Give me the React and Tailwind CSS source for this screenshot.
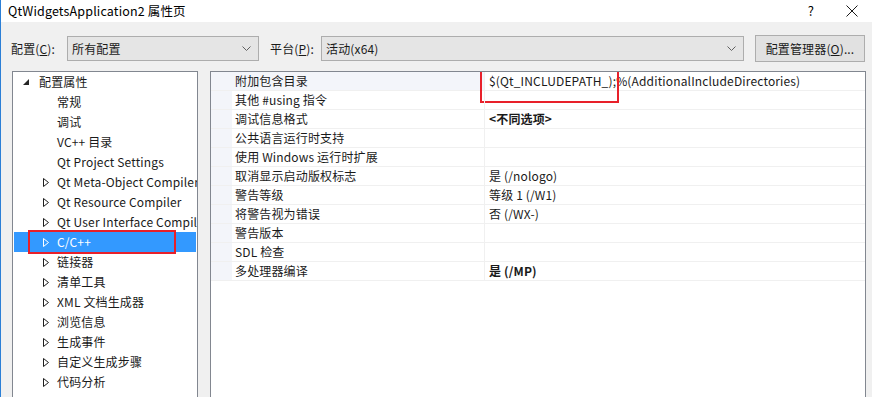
import React from 'react';

const FONT = { fontFamily: '"Noto Sans CJK SC", "Noto Sans", sans-serif' };

const TREE = [
  { label: '配置属性', level: 0, open: true },
  { label: '常规', level: 1 },
  { label: '调试', level: 1 },
  { label: 'VC++ 目录', level: 1 },
  { label: 'Qt Project Settings', level: 1 },
  { label: 'Qt Meta-Object Compiler', level: 1, arrow: true },
  { label: 'Qt Resource Compiler', level: 1, arrow: true },
  { label: 'Qt User Interface Compiler', level: 1, arrow: true },
  { label: 'C/C++', level: 1, arrow: true, selected: true },
  { label: '链接器', level: 1, arrow: true },
  { label: '清单工具', level: 1, arrow: true },
  { label: 'XML 文档生成器', level: 1, arrow: true },
  { label: '浏览信息', level: 1, arrow: true },
  { label: '生成事件', level: 1, arrow: true },
  { label: '自定义生成步骤', level: 1, arrow: true },
  { label: '代码分析', level: 1, arrow: true },
];

const PROPS = [
  ['附加包含目录', '$(Qt_INCLUDEPATH_);%(AdditionalIncludeDirectories)'],
  ['其他 #using 指令', ''],
  ['调试信息格式', '<不同选项>', true],
  ['公共语言运行时支持', ''],
  ['使用 Windows 运行时扩展', ''],
  ['取消显示启动版权标志', '是 (/nologo)'],
  ['警告等级', '等级 1 (/W1)'],
  ['将警告视为错误', '否 (/WX-)'],
  ['警告版本', ''],
  ['SDL 检查', ''],
  ['多处理器编译', '是 (/MP)', true],
];

function Chevron() {
  return (
    <svg width="9" height="6" viewBox="0 0 9 6" className="shrink-0">
      <path d="M0.5 0.5 L4.5 4.5 L8.5 0.5" fill="none" stroke="#606060" strokeWidth="1" />
    </svg>
  );
}

function Combo({ text, className = '' }) {
  return (
    <div
      className={`h-[25px] bg-[#e5e5e5] border border-[#adadad] flex items-center justify-between pl-[4px] pr-[7px] ${className}`}
    >
      <span>{text}</span>
      <Chevron />
    </div>
  );
}

function OpenArrow() {
  return (
    <svg width="6" height="6" viewBox="0 0 6 6" className="shrink-0">
      <polygon points="6,0 6,6 0,6" fill="#262626" />
    </svg>
  );
}

function ClosedArrow({ white }) {
  return (
    <svg width="6" height="9" viewBox="0 0 6 9" className="shrink-0">
      <polygon points="0.5,0.5 5.5,4.5 0.5,8.5" fill="none" stroke={white ? '#ffffff' : '#1e1e1e'} strokeWidth="1" />
    </svg>
  );
}

export default function App() {
  return (
    <div
      className="w-[872px] h-[397px] bg-[#f0f0f0] border-l border-[#2b7fd6] overflow-hidden text-[12px] tracking-[0.15px] text-[#1a1a1a] flex flex-col"
      style={FONT}
    >
      {/* title bar */}
      <div className="h-[22px] bg-white flex items-center shrink-0">
        <span className="pl-[7px] text-[12.5px] text-black">QtWidgetsApplication2 属性页</span>
        <span className="ml-auto mr-[32px] text-[13px] text-black">?</span>
        <svg width="12" height="12" viewBox="0 0 12 12" className="mr-[14px]">
          <path d="M0.5 0.5 L11.5 11.5 M11.5 0.5 L0.5 11.5" stroke="#1a1a1a" strokeWidth="1" />
        </svg>
      </div>

      {/* toolbar */}
      <div className="flex items-center h-[27px] mt-[13px] shrink-0">
        <span className="ml-[10px] w-[56px]">
          配置(<span className="underline">C</span>):
        </span>
        <Combo text="所有配置" className="w-[192px]" />
        <span className="ml-[11px] w-[51px]">
          平台(<span className="underline">P</span>):
        </span>
        <Combo text="活动(x64)" className="w-[423px]" />
        <div className="ml-[11px] w-[110px] h-[27px] bg-[#e1e1e1] border border-[#adadad] flex items-center justify-center">
          配置管理器(<span className="underline">O</span>)...
        </div>
      </div>

      {/* panels */}
      <div className="flex flex-1 mt-[9px] min-h-0">
        <div className="ml-[11px] w-[186px] bg-white border border-[#828790] border-b-0 overflow-hidden">
          {TREE.map((t, i) => (
            <div
              key={i}
              className={`relative h-[20px] flex items-center whitespace-nowrap mx-[1px] ${
                t.selected ? 'bg-[#3399ff] text-white' : ''
              }`}
            >
              {t.level === 0 ? (
                <div className="flex items-center">
                  <span className="ml-[9px] w-[16px] flex">
                    <OpenArrow />
                  </span>
                  <span>{t.label}</span>
                </div>
              ) : (
                <div className="flex items-center">
                  <span className="ml-[29px] w-[14px] flex">
                    {t.arrow && <ClosedArrow white={t.selected} />}
                  </span>
                  <span>{t.label}</span>
                </div>
              )}
              {t.selected && (
                <div className="absolute left-[14px] top-[-2px] w-[148px] h-[24px] border-2 border-[#e8202a]" />
              )}
            </div>
          ))}
        </div>

        <div className="ml-[12px] w-[656px] bg-white border border-[#828790] border-b-0 overflow-hidden">
          {PROPS.map(([name, val, bold], i) => (
            <div key={i} className="relative flex h-[19px] border-b border-[#f0f0f0]">
              <div className="w-[21px] bg-[#f3f5fa] shrink-0" />
              <div
                className={`w-[253px] shrink-0 flex items-center pl-[3px] border-r border-[#f0f0f0] whitespace-nowrap ${
                  i === 0 ? 'bg-[#f3f5fa]' : ''
                }`}
              >
                {name}
              </div>
              <div className={`flex-1 flex items-center pl-[4px] whitespace-nowrap ${bold ? 'font-bold' : ''}`}>
                {val}
              </div>
              {i === 0 && (
                <div className="absolute left-[269px] top-[-6px] w-[139px] h-[37px] border-2 border-[#e8202a]" />
              )}
            </div>
          ))}
        </div>
      </div>
    </div>
  );
}
